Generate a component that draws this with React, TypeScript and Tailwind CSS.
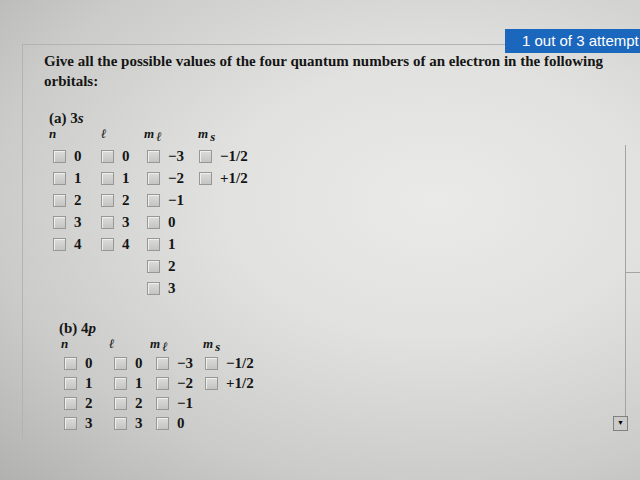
import React from "react";

function Box() {
  return (
    <span className="inline-block w-[13px] h-[13px] shrink-0 border border-[#979795] bg-[linear-gradient(#dcdcda,#c4c4c2)] shadow-[inset_1px_1px_0_#efefed]" />
  );
}

type Col = { w: number; head: React.ReactNode; headOff: string; items: string[] };

function Section({
  cols,
  rowH,
  ml,
  headH,
}: {
  cols: Col[];
  rowH: string;
  ml: string;
  headH: string;
}) {
  return (
    <div className={`flex ${ml}`}>
      {cols.map((c, i) => (
        <div key={i} className="flex flex-col" style={{ width: c.w }}>
          <div className={`${headH} leading-[14px] text-[13px] font-bold italic whitespace-nowrap ${c.headOff}`}>
            {c.head}
          </div>
          {c.items.map((t, j) => (
            <div key={j} className={`flex items-center gap-[8px] ${rowH}`}>
              <Box />
              <span className="text-[15px] font-bold leading-none whitespace-nowrap">{t}</span>
            </div>
          ))}
        </div>
      ))}
    </div>
  );
}

const ML = (
  <span>
    m<span className="relative top-[3px] ml-[2px]">ℓ</span>
  </span>
);
const MS = (
  <span>
    m<span className="relative top-[3px] ml-[2px]">s</span>
  </span>
);
const L = <span>ℓ</span>;

export default function App() {
  const nA = ["0", "1", "2", "3", "4"];
  const mlA = ["−3", "−2", "−1", "0", "1", "2", "3"];
  const ms = ["−1/2", "+1/2"];
  const nB = ["0", "1", "2", "3"];
  const mlB = ["−3", "−2", "−1", "0"];

  return (
    <div className="relative w-[640px] h-[480px] overflow-hidden bg-[radial-gradient(ellipse_at_68%_42%,#eaebe8_0%,#e1e2df_35%,#cbccc9_72%,#b1b2af_100%)] text-[#151515] font-['Liberation_Serif',serif]">
      <div className="h-[44px]" />
      <div className="ml-[22px] h-[395px] border-l border-t border-[#b3b4b1] pt-[6px] pl-[21px]">
        <p className="text-[15px] font-bold leading-[20px] pr-[10px]">
          Give all the possible values of the four quantum numbers of an electron in the following orbitals:
        </p>
        <div className="mt-[18px] ml-[5px] text-[15px] font-bold leading-[18px]">
          (a) 3<span className="italic">s</span>
        </div>
        <Section
          ml="ml-[9px]"
          rowH="h-[22px]"
          headH="h-[18px]"
          cols={[
            { w: 48, head: "n", headOff: "-ml-[4px]", items: nA },
            { w: 46, head: L, headOff: "ml-[0px]", items: nA },
            { w: 52, head: ML, headOff: "-ml-[3px]", items: mlA },
            { w: 60, head: MS, headOff: "-ml-[1px]", items: ms },
          ]}
        />
        <div className="mt-[20px] ml-[15px] text-[15px] font-bold leading-[18px]">
          (b) 4<span className="italic">p</span>
        </div>
        <Section
          ml="ml-[20px]"
          rowH="h-[20px]"
          headH="h-[16px]"
          cols={[
            { w: 50, head: "n", headOff: "-ml-[3px]", items: nB },
            { w: 42, head: L, headOff: "-ml-[5px]", items: nB },
            { w: 49, head: ML, headOff: "-ml-[6px]", items: mlB },
            { w: 60, head: MS, headOff: "-ml-[2px]", items: ms },
          ]}
        />
      </div>

      {/* attempts badge */}
      <div className="absolute left-[505px] top-[29px] w-[135px] h-[24px] bg-[#1b67bd]">
        <div className="pl-[17px] text-white text-[15px] leading-[24px] whitespace-nowrap font-['Liberation_Sans',sans-serif]">
          1 out of 3 attempt
        </div>
      </div>

      {/* scrollbar remnants */}
      <div className="absolute left-[625px] top-[145px] w-[15px] h-[271px] border-l border-[#a4a5a2]">
        <div className="h-[128px] border-b border-[#a4a5a2]" />
      </div>
      <div className="absolute left-[613px] top-[416px] w-[15px] h-[15px] border border-[#80817e] bg-[#cbccc9] flex items-center justify-center">
        <span className="text-[7px] leading-none text-black">▼</span>
      </div>
    </div>
  );
}
